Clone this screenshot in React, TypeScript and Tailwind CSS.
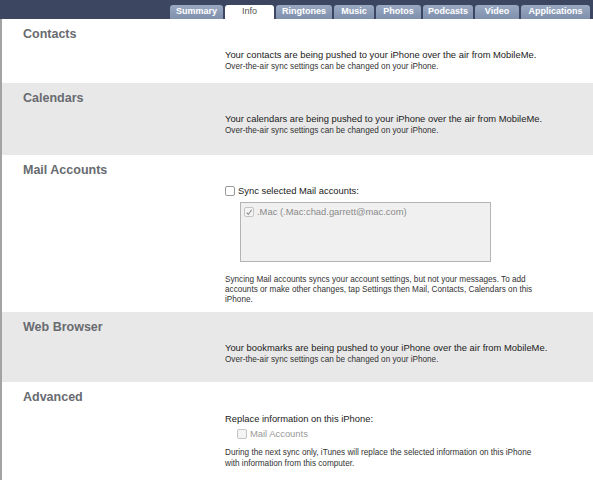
import React from 'react';

const tabs = ['Summary', 'Info', 'Ringtones', 'Music', 'Photos', 'Podcasts', 'Video', 'Applications'];
const tabWidths = [53, 49, 56, 40, 45, 50, 44, 69];

const Box: React.FC<{ checked?: boolean; dim?: boolean }> = ({ checked, dim }) => (
  <span
    className={`inline-flex h-[10px] w-[10px] shrink-0 items-center justify-center rounded-[2px] border ${
      dim ? 'border-[#c4c4c4] bg-[#f4f4f4]' : 'border-[#9a9a9a] bg-white'
    }`}
  >
    {checked && (
      <svg viewBox="0 0 10 10" className="h-[9px] w-[9px]">
        <path d="M2 5.2 L4.2 7.5 L8.3 1.8" fill="none" stroke="#8f8f8f" strokeWidth="1.4" />
      </svg>
    )}
  </span>
);

const Section: React.FC<{ title: string; gray?: boolean; h: string; children: React.ReactNode }> = ({
  title,
  gray,
  h,
  children,
}) => (
  <section className={`flex flex-col ${h} ${gray ? 'bg-[#e8e8e8]' : 'bg-white'}`}>
    <h2 className="pl-[21px] pt-[7px] text-[12.5px] font-bold leading-[16px] text-[#686b70]">{title}</h2>
    <div className="pl-[223px]">{children}</div>
  </section>
);

const Pushed: React.FC<{ what: string }> = ({ what }) => (
  <div className="pt-[7px]">
    <p className="text-[9.4px] leading-[12px] text-[#222]">
      Your {what} are being pushed to your iPhone over the air from MobileMe.
    </p>
    <p className="text-[8.2px] leading-[11px] text-[#333]">Over-the-air sync settings can be changed on your iPhone.</p>
  </div>
);

export default function App() {
  return (
    <div className="h-[480px] w-[593px] overflow-hidden bg-white" style={{ fontFamily: '"Liberation Sans", Arial, sans-serif' }}>
      <div className="flex h-[19px] items-end bg-[#3c4660] pl-[170px]">
        {tabs.map((t, i) => (
          <div
            key={t}
            style={{ width: tabWidths[i] }}
            className={`mr-[2px] flex h-[14px] shrink-0 items-center justify-center rounded-t-[3px] text-[9px] ${
              t === 'Info'
                ? 'bg-white text-[#555]'
                : 'bg-gradient-to-b from-[#9aa9c2] to-[#7f90ad] font-bold text-white'
            }`}
          >
            {t}
          </div>
        ))}
      </div>
      <div className="border-l-2 border-[#a3a3a3]">
        <Section title="Contacts" h="h-[64px]">
          <Pushed what="contacts" />
        </Section>
        <Section title="Calendars" gray h="h-[72px]">
          <Pushed what="calendars" />
        </Section>
        <Section title="Mail Accounts" h="h-[157px]">
          <div className="pt-[7px]">
            <label className="flex items-center gap-[3px] text-[9.4px] leading-[12px] text-[#222]">
              <Box />
              Sync selected Mail accounts:
            </label>
            <div className="ml-[15px] mt-[5px] h-[60px] w-[251px] border border-[#b4b4b4] bg-[#f0f0f0] px-[3px] pt-[3px]">
              <div className="flex items-center gap-[3px] text-[9.4px] leading-[12px] text-[#8a8a8a]">
                <Box checked dim />
                .Mac (.Mac:chad.garrett@mac.com)
              </div>
            </div>
            <p className="mt-[13px] w-[312px] text-[8.2px] leading-[10px] text-[#333]">
              Syncing Mail accounts syncs your account settings, but not your messages. To add accounts or make other
              changes, tap Settings then Mail, Contacts, Calendars on this iPhone.
            </p>
          </div>
        </Section>
        <Section title="Web Browser" gray h="h-[70px]">
          <Pushed what="bookmarks" />
        </Section>
        <Section title="Advanced" h="h-[98px]">
          <div className="pt-[8px]">
            <p className="text-[9.4px] leading-[12px] text-[#222]">Replace information on this iPhone:</p>
            <label className="ml-[12px] mt-[3px] flex items-center gap-[3px] text-[9.4px] leading-[12px] text-[#999]">
              <Box dim />
              Mail Accounts
            </label>
            <p className="mt-[7px] w-[312px] text-[8.2px] leading-[11px] text-[#333]">
              During the next sync only, iTunes will replace the selected information on this iPhone with information
              from this computer.
            </p>
          </div>
        </Section>
      </div>
    </div>
  );
}
